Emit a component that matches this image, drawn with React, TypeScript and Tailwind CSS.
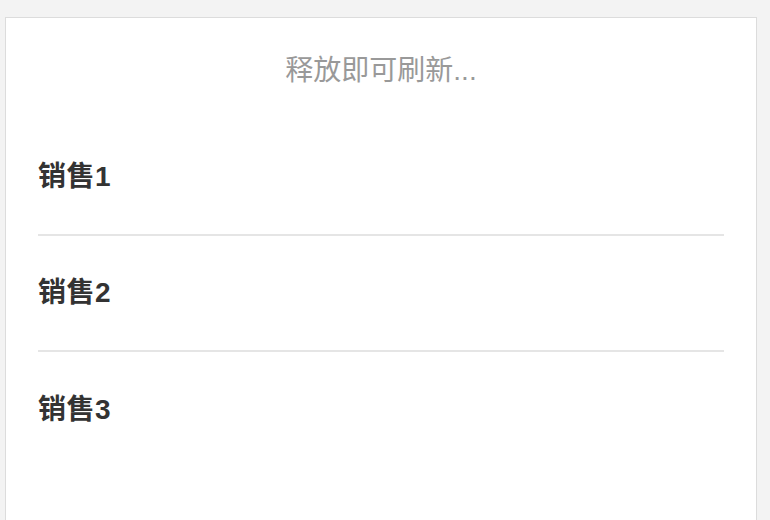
const rows = ['销售1', '销售2', '销售3'];

export default function App() {
  return (
    <div
      className="h-[520px] w-[770px] overflow-hidden bg-[#f3f3f3] pt-[17px] pl-[5px]"
      style={{ fontFamily: '"Liberation Sans", "Noto Sans CJK SC", sans-serif' }}
    >
      <div className="h-[520px] w-[752px] border border-b-0 border-[#dcdcdc] bg-white">
        {/* pull-to-refresh hint */}
        <div className="flex h-[102px] items-center justify-center pt-[3px] text-[28px] text-[#999999]">
          释放即可刷新...
        </div>

        {/* list */}
        <div className="px-8">
          {rows.map((name, i) => (
            <div
              key={name}
              className={`flex h-[116px] items-center text-[28px] font-bold tracking-[0.5px] text-[#333333] ${
                i < rows.length - 1 ? 'border-b-2 border-[#e5e5e5]' : ''
              }`}
            >
              <span>{name}</span>
            </div>
          ))}
        </div>
      </div>
    </div>
  );
}
